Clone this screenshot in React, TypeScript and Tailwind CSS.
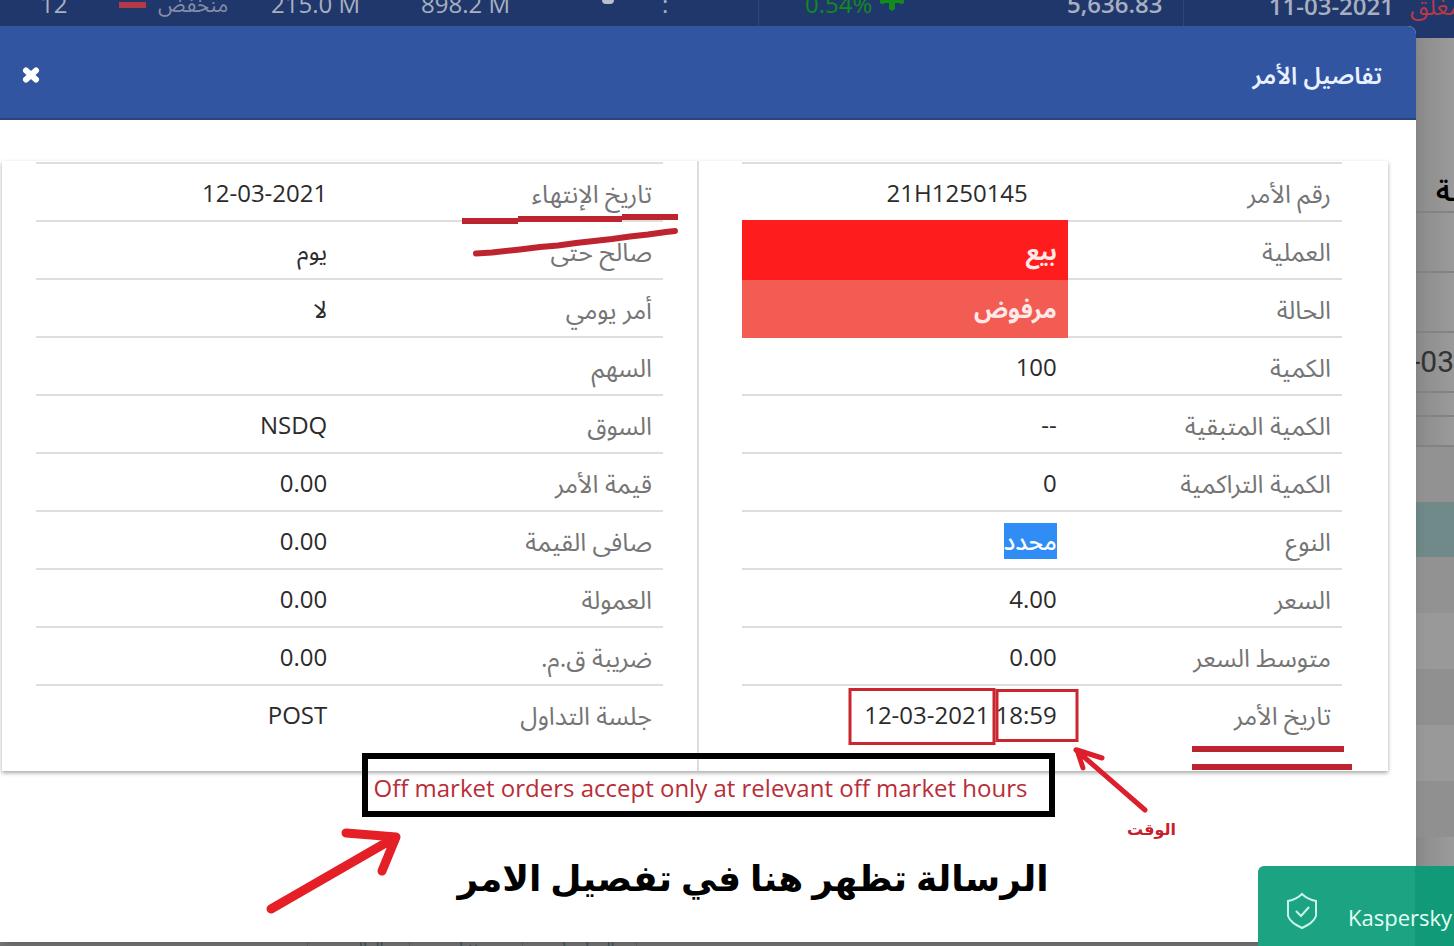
import React from 'react';

interface DetailRow {
  label: string;
  value: string;
  tone?: 'sell' | 'rejected' | 'selected' | 'indent';
}

const orderRows: DetailRow[] = [
  { label: 'رقم الأمر', value: '21H1250145', tone: 'indent' },
  { label: 'العملية', value: 'بيع', tone: 'sell' },
  { label: 'الحالة', value: 'مرفوض', tone: 'rejected' },
  { label: 'الكمية', value: '100' },
  { label: 'الكمية المتبقية', value: '--' },
  { label: 'الكمية التراكمية', value: '0' },
  { label: 'النوع', value: 'محدد', tone: 'selected' },
  { label: 'السعر', value: '4.00' },
  { label: 'متوسط السعر', value: '0.00' },
  { label: 'تاريخ الأمر', value: '12-03-2021 18:59' },
];

const marketRows: DetailRow[] = [
  { label: 'تاريخ الإنتهاء', value: '12-03-2021' },
  { label: 'صالح حتى', value: 'يوم' },
  { label: 'أمر يومي', value: 'لا' },
  { label: 'السهم', value: '' },
  { label: 'السوق', value: 'NSDQ' },
  { label: 'قيمة الأمر', value: '0.00' },
  { label: 'صافى القيمة', value: '0.00' },
  { label: 'العمولة', value: '0.00' },
  { label: 'ضريبة ق.م.', value: '0.00' },
  { label: 'جلسة التداول', value: 'POST' },
];

const toneClass = {
  sell: 'border-y-2 border-[#ff1c1c] bg-[#ff1c1c] font-bold text-[#ffe9e9]',
  rejected: 'border-b-2 border-[#f35c52] bg-[#f35c52] font-bold text-[#ffe9e9]',
  selected: '',
  indent: '',
};

interface DetailTableProps {
  rows: DetailRow[];
  labelWidth: string;
}

const DetailTable: React.FC<DetailTableProps> = ({ rows, labelWidth }) => (
  <table className="w-full table-fixed border-t-2 border-[#dedede] text-2xl leading-8">
    <colgroup>
      <col className={labelWidth} />
      <col />
    </colgroup>
    <tbody>
      {rows.map((row) => (
        <tr key={row.label} className="h-[58px] border-b-2 border-[#dedede] last:border-b-0">
          <th scope="row" className="px-[11px] pt-px text-start text-[25px] font-normal text-[#757575]">
            {row.label}
          </th>
          <td
            className={`pt-px text-start text-[#2b2b2b] ${row.tone === 'indent' ? 'px-10' : 'px-[11px]'} ${
              row.tone ? toneClass[row.tone] : ''
            }`}
          >
            {row.tone === 'selected' ? (
              <span className="inline-block bg-[#2f8df5] leading-9 font-medium text-white">{row.value}</span>
            ) : (
              <bdi dir={/^[\d-]/.test(row.value) ? 'ltr' : undefined}>{row.value}</bdi>
            )}
          </td>
        </tr>
      ))}
    </tbody>
  </table>
);

const MarketBar = () => (
  <header dir="ltr" className="flex h-[38px] overflow-hidden bg-[#20376b] text-2xl leading-8 text-[#a9afc0]">
    <div className="-mt-3 flex w-[52.2%] items-start border-r border-[#2f4577] pl-10">
      <span className="w-[79px]">12</span>
      <span className="mt-3.5 mr-3 h-[6px] w-[27px] bg-[#b23a48]" />
      <span className="w-[113px] text-[21px] leading-8 text-[#858da6]">منخفض</span>
      <span className="w-[150px]">215.0 M</span>
      <span className="w-[181px]">898.2 M</span>
      <span className="mt-2 h-2 w-3 rounded-full bg-[#b9bfd0]" />
      <span className="ml-12">:</span>
    </div>
    <div className="-mt-3 flex w-[29.2%] items-start justify-between border-r border-[#2f4577] pr-5 pl-[46px]">
      <span className="flex gap-2 text-[#138a1c]">
        0.54%
        <svg className="mt-3 h-3 w-6" viewBox="0 0 24 12" fill="currentColor">
          <path d="M0 0h24v3q-3 2-5 0h-4v6l-3 2-3-2V3H5Q3 5 0 3z" />
        </svg>
      </span>
      <span className="font-semibold">5,636.83</span>
    </div>
    <div className="-mt-2.5 flex flex-1 items-start justify-end gap-4 whitespace-nowrap">
      <span className="font-semibold">11-03-2021</span>
      <span className="w-11 text-[#b43a48]">مغلق</span>
    </div>
  </header>
);

const BackgroundPage = () => (
  <div className="flex min-h-screen flex-col bg-[#989898]">
    <MarketBar />
    <div className="flex flex-1 justify-start">
      <div className="w-[38px] bg-gradient-to-r from-[#8b8b8b] to-[#9b9b9b]" dir="ltr">
        <div className="h-[175px] border-b-2 border-[#838383] pt-[134px] pl-5 text-[28px] leading-9 font-semibold text-black">
          ـة
        </div>
        <div className="h-[60px] border-b-2 border-[#838383]" />
        <div className="h-[60px] border-b-2 border-[#838383]" />
        <div className="flex h-[60px] items-center justify-end border-b-2 border-[#838383] font-[Roboto] text-3xl text-[#333333]">
          -03
        </div>
        <div className="h-6 border-b-2 border-[#838383]" />
        <div className="h-[30px] border-b-2 border-[#838383]" />
        <div className="h-[55px] bg-[#929292]" />
        <div className="h-[55px] bg-[#708989]" />
        <div className="h-14 bg-[#929292]" />
        <div className="h-14 bg-[#999999]" />
        <div className="h-14 bg-[#909090]" />
        <div className="h-14 bg-[#999999]" />
        <div className="h-14 bg-[#909090]" />
      </div>
    </div>
    <footer dir="ltr" className="flex h-1 overflow-hidden bg-[#757575] pl-[307px] text-lg leading-3 text-[#3c5960]">
      <span className="w-[103px] border-x border-[#666666] pl-3 text-center">التالي</span>
      <span className="w-[113px] border-r border-[#666666] text-center">لـ ×</span>
      <span className="w-[114px] border-r border-[#666666] text-center">التعليمات</span>
    </footer>
  </div>
);

// Hand drawn marks laid over the dialog
const Annotations = () => (
  <div className="pointer-events-none absolute inset-0" dir="ltr">
    <svg className="absolute top-0 left-0 h-[946px] w-[1454px]" viewBox="0 0 1454 946" fill="none">
      <g stroke="#be2430" strokeWidth="6">
        <path d="M462 221H518M518 219H622M622 217H678" />
        <path
          d="M476 253.500L492 252.500L520 249.500L540 247L558 245.500L576 243L594 241L612 239L630 236.500L648 234.500L666 232L675 231"
          strokeLinecap="round"
        />
        <path d="M1192 749H1344M1192 767H1352" />
      </g>
      <g stroke="#c9262f" strokeWidth="3">
        <rect x="850" y="689.500" width="144" height="54" />
        <rect x="997" y="690.500" width="80" height="50" />
      </g>
      <path
        d="M1145 810L1076 750M1083 768L1077 750L1102 758"
        stroke="#dd1f2c"
        strokeWidth="5"
        strokeLinecap="round"
        strokeLinejoin="round"
      />
      <path
        d="M271 909L396 837M346 833L396 837L382 871"
        stroke="#e51f26"
        strokeWidth="9"
        strokeLinecap="round"
        strokeLinejoin="round"
      />
    </svg>
    <span className="absolute top-[816px] left-[1127px] font-['Liberation_Serif','DejaVu_Sans',serif] text-base leading-7 font-bold text-[#c9202c]">
      الوقت
    </span>
  </div>
);

const SecurityToast = () => (
  <div
    dir="ltr"
    className="absolute right-0 bottom-0 flex h-20 w-[196px] items-center gap-[30px] overflow-hidden rounded-tl-md bg-gradient-to-r from-[#1ba382] from-80% to-[#109a78] to-80% pt-[22px] pl-7 text-[22px] whitespace-nowrap text-[#e4fff6]"
  >
    <svg className="-mt-3 h-10 w-8 shrink-0" viewBox="0 0 32 40" fill="none" stroke="#c9f5e8" strokeWidth="2">
      <path d="M16 3C12 7 7 9 2 10V25C4 31 10 34 16 37C22 34 28 31 30 25V10C25 9 20 7 16 3Z" />
      <path d="M10 20L15 25L23 16" />
    </svg>
    Kaspersky
  </div>
);

export default function App() {
  return (
    <div
      dir="rtl"
      className="relative min-h-screen overflow-hidden font-['Open_Sans','Noto_Sans_Arabic','DejaVu_Sans',sans-serif]"
    >
      <BackgroundPage />
      <div className="absolute inset-0 flex pt-[26px] pr-[38px] pb-1">
        <section
          role="dialog"
          aria-labelledby="dialog-title"
          className="flex flex-1 flex-col rounded-tr-lg bg-white shadow-lg"
        >
          <div className="flex h-[94px] items-center justify-between rounded-tr-lg border-b-2 border-[#29447f] bg-[#3155a1] pt-1.5 pr-[34px] pl-5 text-[#e9f0ff]">
            <h2 id="dialog-title" className="text-2xl font-semibold">
              تفاصيل الأمر
            </h2>
            <button type="button" aria-label="إغلاق" className="p-px text-white">
              <svg className="h-5 w-5" viewBox="0 0 20 20" stroke="currentColor" strokeWidth="6" strokeLinecap="round">
                <path d="M5 5.500L15 14.500M15 5.500L5 14.500" />
              </svg>
            </button>
          </div>
          <div className="pt-[41px] pr-7 pl-[2px]">
            <div className="grid grid-cols-[691fr_695fr] bg-white shadow-[0_2px_4px_rgba(0,0,0,0.35)]">
              <div className="border-l-2 border-[#dedede] pt-px pr-[46px] pb-7 pl-[43px]">
                <DetailTable rows={orderRows} labelWidth="w-[45.7%]" />
              </div>
              <div className="px-[34px] pt-px pb-7">
                <DetailTable rows={marketRows} labelWidth="w-[51.8%]" />
              </div>
            </div>
          </div>
          <div className="z-10 -mt-[18px] flex justify-center" dir="ltr">
            <p className="w-[693px] border-6 border-black pt-2.5 pb-1 pl-[6px] text-2xl leading-[38px] whitespace-nowrap text-[#b92d38]">
              Off market orders accept only at relevant off market hours
            </p>
          </div>
          <p
            className="mt-8 pl-[90px] text-center font-['Liberation_Serif','DejaVu_Sans',serif] text-4xl leading-[60px] font-bold text-black"
            dir="rtl"
          >
            الرسالة تظهر هنا في تفصيل الامر
          </p>
        </section>
      </div>
      <Annotations />
      <SecurityToast />
    </div>
  );
}
